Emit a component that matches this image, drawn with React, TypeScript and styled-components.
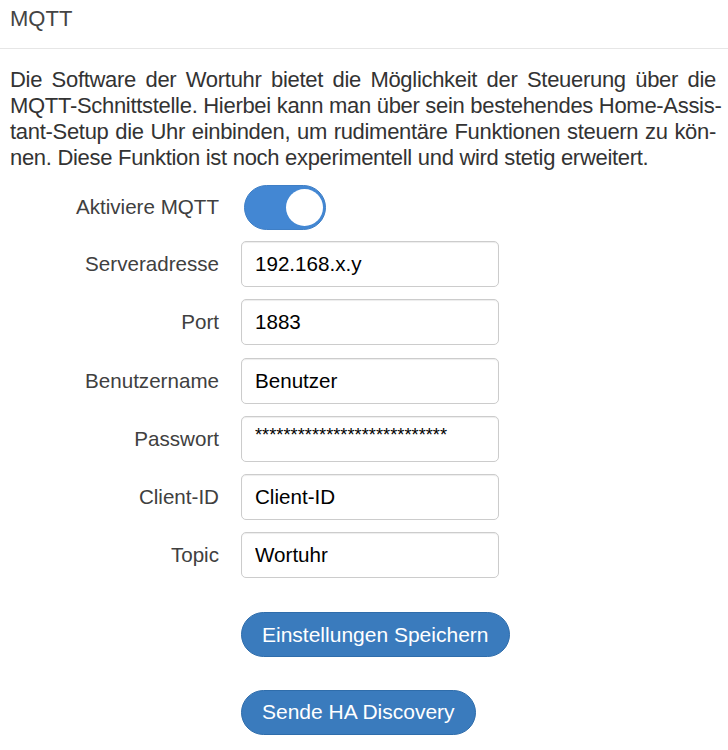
import React from "react";
import styled, { createGlobalStyle } from "styled-components";

const GlobalStyle = createGlobalStyle`
  html, body {
    margin: 0;
    padding: 0;
    background: #ffffff;
  }
  body {
    font-family: "Liberation Sans", Arial, Helvetica, sans-serif;
    color: #333333;
  }
  * { box-sizing: border-box; }
`;

const Page = styled.div`
  width: 728px;
  min-height: 750px;
  background: #fff;
`;

const Header = styled.header`
  padding: 6px 10px 0 10px;
  height: 49px;
  border-bottom: 1px solid #e6e6e6;
  font-size: 22px;
  line-height: 26px;
  color: #444444;
`;

const Body = styled.main`
  padding: 18px 12px 0 10px;
`;

const Intro = styled.p`
  margin: 0;
  font-size: 22px;
  line-height: 26px;
  letter-spacing: -0.3px;
  color: #333333;
  text-align: justify;
`;

const Line = styled.span<{ $last?: boolean }>`
  display: block;
  white-space: nowrap;
  text-align: justify;
  text-align-last: ${(p) => (p.$last ? "left" : "justify")};
`;

const Form = styled.form`
  margin-top: 14px;
  display: grid;
  grid-template-columns: 209px 258px;
  column-gap: 22px;
  row-gap: 12.2px;
  align-items: center;
`;

const Label = styled.label`
  text-align: right;
  font-size: 20.6px;
  color: #404040;
  white-space: nowrap;
`;

const ToggleCell = styled.div`
  display: flex;
  align-items: center;
  height: 44px;
`;

const Toggle = styled.button<{ $on: boolean }>`
  position: relative;
  margin-left: 3px;
  width: 82px;
  height: 45px;
  border-radius: 23px;
  border: 1px solid #3f7fc6;
  padding: 0;
  background: ${(p) => (p.$on ? "#4387d3" : "#d0d0d0")};
  cursor: pointer;
`;

const Knob = styled.span<{ $on: boolean }>`
  position: absolute;
  top: 3px;
  left: ${(p) => (p.$on ? "41px" : "3px")};
  width: 37px;
  height: 37px;
  border-radius: 50%;
  background: #ffffff;
`;

const Field = styled.input<{ $small?: boolean }>`
  width: 258px;
  height: 46px;
  padding: ${(p) => (p.$small ? "0 13px 8px" : "0 13px")};
  border: 1px solid #cccccc;
  border-radius: 5px;
  box-shadow: inset 0 1px 1px rgba(0, 0, 0, 0.075);
  font-family: "Liberation Sans", Arial, Helvetica, sans-serif;
  font-size: ${(p) => (p.$small ? "18.3px" : "20.6px")};
  color: #000000;
  background: #fff;
  outline: none;
`;

const ActionButton = styled.button<{ $first?: boolean }>`
  grid-column: 2;
  justify-self: start;
  margin-top: ${(p) => (p.$first ? "22px" : "20px")};
  height: 45px;
  padding: 0 20px;
  border-radius: 23px;
  border: 1px solid #2f6dab;
  background: #3a7bbd;
  color: #ffffff;
  font-family: "Liberation Sans", Arial, Helvetica, sans-serif;
  font-size: 21px;
  white-space: nowrap;
  cursor: pointer;
`;

const fields = [
  { label: "Serveradresse", value: "192.168.x.y" },
  { label: "Port", value: "1883" },
  { label: "Benutzername", value: "Benutzer" },
  { label: "Passwort", value: "***************************", small: true },
  { label: "Client-ID", value: "Client-ID" },
  { label: "Topic", value: "Wortuhr" },
];

export default function App() {
  const [on, setOn] = React.useState(true);
  return (
    <Page>
      <GlobalStyle />
      <Header>MQTT</Header>
      <Body>
        <Intro lang="de">
          <Line>Die Software der Wortuhr bietet die Möglichkeit der Steuerung über die</Line>
          <Line>MQTT-Schnittstelle. Hierbei kann man über sein bestehendes Home-Assis-</Line>
          <Line>tant-Setup die Uhr einbinden, um rudimentäre Funktionen steuern zu kön-</Line>
          <Line $last>nen. Diese Funktion ist noch experimentell und wird stetig erweitert.</Line>
        </Intro>
        <Form onSubmit={(e) => e.preventDefault()}>
          <Label>Aktiviere MQTT</Label>
          <ToggleCell>
            <Toggle type="button" $on={on} onClick={() => setOn(!on)} aria-pressed={on}>
              <Knob $on={on} />
            </Toggle>
          </ToggleCell>
          {fields.map((f) => (
            <React.Fragment key={f.label}>
              <Label>{f.label}</Label>
              <Field type="text" defaultValue={f.value} $small={f.small} />
            </React.Fragment>
          ))}
          <ActionButton type="button" $first>Einstellungen Speichern</ActionButton>
          <ActionButton type="button">Sende HA Discovery</ActionButton>
        </Form>
      </Body>
    </Page>
  );
}
